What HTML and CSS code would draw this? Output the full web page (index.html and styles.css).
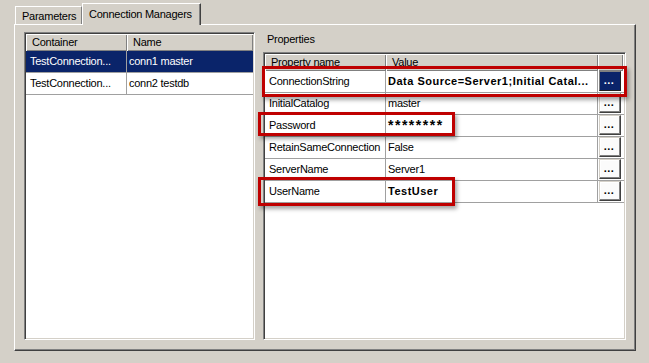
FILE: index.html
```html
<!DOCTYPE html>
<html>
<head>
<meta charset="utf-8">
<link rel="stylesheet" href="styles.css">
</head>
<body>
<div class="root">
  <div class="tabs">
    <div class="tab">Parameters</div>
    <div class="tab active">Connection Managers</div>
  </div>
  <div class="panel">
    <div class="list">
      <div class="lhead">
        <div class="hc c1">Container</div>
        <div class="hc c2">Name</div>
      </div>
      <div class="lrow sel">
        <div class="lc c1">TestConnection...</div>
        <div class="lc c2">conn1 master</div>
      </div>
      <div class="lrow">
        <div class="lc c1">TestConnection...</div>
        <div class="lc c2">conn2 testdb</div>
      </div>
    </div>
    <div class="props">
      <div class="plabel">Properties</div>
      <div class="grid">
        <div class="ghead">
          <div class="hc pn">Property name</div>
          <div class="hc pv">Value</div>
          <div class="hc pb"></div>
        </div>
        <div class="grow">
          <div class="gc pn">ConnectionString</div>
          <div class="gc pv b">Data Source=Server1;Initial Catal...</div>
          <div class="gc pb"><div class="btn focus">...</div></div>
        </div>
        <div class="grow">
          <div class="gc pn">InitialCatalog</div>
          <div class="gc pv">master</div>
          <div class="gc pb"><div class="btn">...</div></div>
        </div>
        <div class="grow">
          <div class="gc pn">Password</div>
          <div class="gc pv b pw">********</div>
          <div class="gc pb"><div class="btn">...</div></div>
        </div>
        <div class="grow">
          <div class="gc pn">RetainSameConnection</div>
          <div class="gc pv">False</div>
          <div class="gc pb"><div class="btn">...</div></div>
        </div>
        <div class="grow">
          <div class="gc pn">ServerName</div>
          <div class="gc pv">Server1</div>
          <div class="gc pb"><div class="btn">...</div></div>
        </div>
        <div class="grow">
          <div class="gc pn">UserName</div>
          <div class="gc pv b">TestUser</div>
          <div class="gc pb"><div class="btn">...</div></div>
        </div>
      </div>
    </div>
  </div>
  <div class="mark m1"></div>
  <div class="mark m2"></div>
  <div class="mark m3"></div>
</div>
</body>
</html>
```

FILE: styles.css
```css
* { box-sizing: border-box; }
html, body { margin: 0; padding: 0; }
body {
  background: #d4d0c8;
  font-family: "Liberation Sans", Arial, sans-serif;
  font-size: 11px;
  letter-spacing: -0.25px;
  color: #000;
}
.root {
  position: relative;
  width: 649px;
  height: 363px;
  padding: 3px 0 0 14px;
}
.tabs {
  display: flex;
  align-items: flex-end;
  height: 21px;
  position: relative;
  z-index: 2;
}
.tab {
  height: 18px;
  width: 67px;
  margin-left: 1px;
  border-top: 1px solid #fff;
  border-left: 1px solid #fff;
  border-right: 1px solid #808080;
  padding: 3px 0 0 6px;
  line-height: 13px;
  white-space: nowrap;
  background: #d4d0c8;
}
.tab.active {
  height: 22px;
  width: 119px;
  margin-left: 0;
  margin-bottom: -1px;
  border-right: 1px solid #404040;
  box-shadow: inset -1px 0 #808080;
  padding-top: 4px;
}
.panel {
  width: 622px;
  height: 327px;
  border: 1px solid;
  border-color: #fff #404040 #404040 #fff;
  box-shadow: inset -1px -1px #808080;
  padding: 7px 0 0 9px;
  display: flex;
  gap: 8px;
}
.list, .grid {
  background: #fff;
  border: 1px solid;
  border-color: #808080 #fff #fff #808080;
  box-shadow: inset 1px 1px #404040, inset -1px -1px #d4d0c8;
  padding: 1px;
}
.list {
  width: 231px;
  height: 308px;
}
.lhead, .ghead {
  display: flex;
  height: 17px;
}
.hc {
  background: #d4d0c8;
  box-shadow: inset 1px 1px #fff, inset -1px -1px #808080;
  line-height: 17px;
  padding-left: 6px;
  white-space: nowrap;
  overflow: hidden;
}
.c1 { width: 101px; }
.c2 { flex: 1; }
.lrow {
  display: flex;
  height: 22px;
  border-bottom: 1px solid #a0a0a0;
}
.lc {
  line-height: 21px;
  white-space: nowrap;
  overflow: hidden;
}
.lc.c1 { padding-left: 4px; border-right: 1px solid #a0a0a0; }
.lc.c2 { padding-left: 2px; }
.lrow.sel { background: #0a246a; color: #fff; }
.props {
  width: 363px;
  height: 308px;
  display: flex;
  flex-direction: column;
}
.plabel {
  height: 20px;
  padding: 1px 0 0 4px;
  line-height: 13px;
}
.grid { flex: 1; }
.pn { width: 121px; }
.pv { width: 212px; }
.pb { width: 25px; }
.hc.pb { padding: 0; }
.grow {
  display: flex;
  height: 22px;
  border-bottom: 1px solid #a0a0a0;
}
.gc {
  line-height: 21px;
  white-space: nowrap;
  overflow: hidden;
}
.gc.pn { padding-left: 4px; border-right: 1px solid #a0a0a0; }
.gc.pv { padding-left: 2px; border-right: 1px solid #a0a0a0; }
.gc.pb { padding: 0 0 0 1px; }
.b { font-weight: bold; letter-spacing: 0.5px; }
.gc.pw {
  font-size: 14px;
  letter-spacing: 1.5px;
  line-height: 21px;
}
.btn {
  width: 22px;
  height: 20px;
  background: #fbfbfb;
  border: 1px solid;
  border-color: #d4d0c8 #404040 #404040 #d4d0c8;
  box-shadow: inset -1px -1px #808080, inset 1px 1px #fff;
  text-align: center;
  line-height: 16px;
  font-weight: bold;
  letter-spacing: 0.5px;
  padding-right: 2px;
}
.btn.focus {
  background: #0a246a;
  color: #fff;
  border-color: #808080 #202020 #202020 #808080;
  box-shadow: none;
}
.mark {
  position: absolute;
  border: 3px solid #bf0000;
  box-shadow: 2px 3px 4px rgba(0, 0, 0, 0.35);
}
.m1 { left: 262px; top: 66px; width: 365px; height: 31px; }
.m2 { left: 258px; top: 112px; width: 197px; height: 24px; }
.m3 { left: 258px; top: 177px; width: 197px; height: 29px; }
```
